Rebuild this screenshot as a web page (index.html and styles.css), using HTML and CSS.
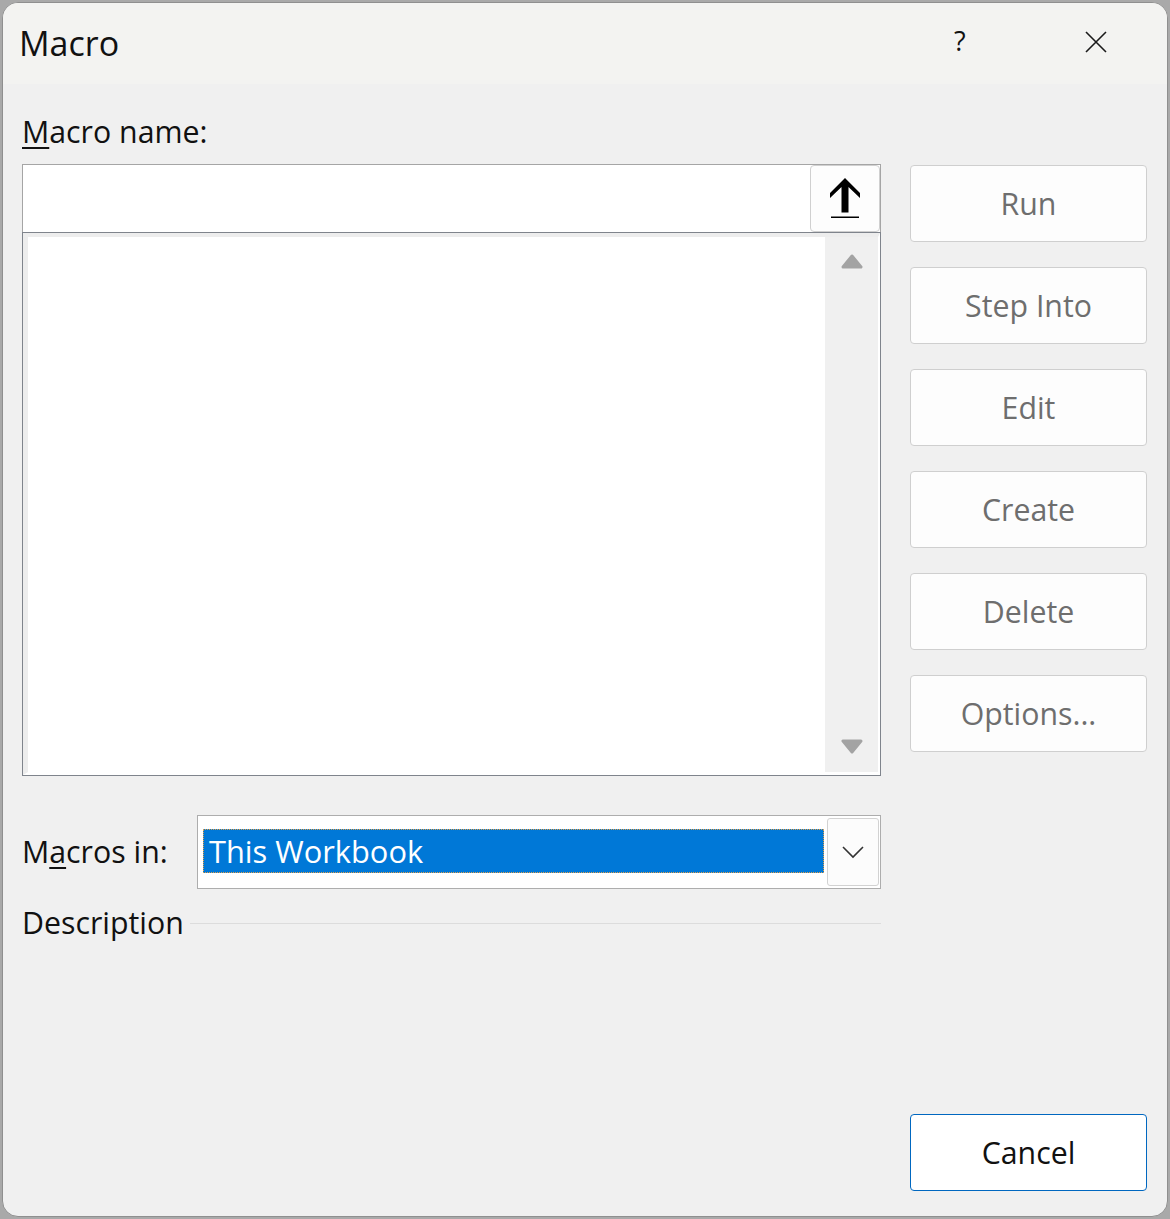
FILE: index.html
```html
<!DOCTYPE html>
<html>
<head>
  <meta charset="utf-8">
  <title>Macro</title>
  <link rel="stylesheet" href="styles.css">
</head>
<body>
<div class="dialog">
  <!-- title bar -->
  <div class="title-bar">
    <div class="title">Macro</div>
    <div class="title-help">?</div>
    <div class="title-close">
      <svg width="22" height="22" viewBox="0 0 22 22"><path d="M1 1 L21 21 M21 1 L1 21" stroke="#1a1a1a" stroke-width="1.6" fill="none"/></svg>
    </div>
  </div>

  <div class="main">
    <div class="left-col">
      <div class="label"><u>M</u>acro name:</div>
      <div class="name-box">
        <div class="name-input"></div>
        <div class="up-btn">
          <svg width="70" height="67" viewBox="0 0 70 67">
            <polygon points="35,13 50,28 50,33 38.5,22 38.5,47.5 31.5,47.5 31.5,22 20,33 20,28" fill="#000"/>
            <rect x="21" y="51.5" width="28" height="1.5" fill="#000"/>
          </svg>
        </div>
      </div>
      <div class="list-box">
        <div class="list-inner">
          <div class="list-area"></div>
          <div class="scroll">
            <svg width="22" height="16" viewBox="0 0 22 16"><path d="M11 2 L20 13 L2 13 Z" fill="#a3a3a3" stroke="#a3a3a3" stroke-width="3" stroke-linejoin="round"/></svg>
            <svg width="22" height="16" viewBox="0 0 22 16"><path d="M2 2 L20 2 L11 13 Z" fill="#a3a3a3" stroke="#a3a3a3" stroke-width="3" stroke-linejoin="round"/></svg>
          </div>
        </div>
      </div>

      <div class="macros-in">
        <div class="label in-label">M<u>a</u>cros in:</div>
        <div class="combo">
          <div class="combo-value"><span>This Workbook</span></div>
          <div class="combo-btn">
            <svg width="24" height="14" viewBox="0 0 24 14"><path d="M2 2 L12 12 L22 2" stroke="#333" stroke-width="1.6" fill="none"/></svg>
          </div>
        </div>
      </div>

      <div class="desc">
        <div class="label">Description</div>
        <div class="desc-line"></div>
      </div>
    </div>

    <div class="right-col">
      <div class="btn">Run</div>
      <div class="btn">Step Into</div>
      <div class="btn">Edit</div>
      <div class="btn">Create</div>
      <div class="btn">Delete</div>
      <div class="btn">Options...</div>
      <div class="btn cancel">Cancel</div>
    </div>
  </div>
</div>
</body>
</html>
```

FILE: styles.css
```css
/* page */
body { margin: 0; padding: 0; background: #a9a9a9; font-family: "Open Sans", "Noto Sans", sans-serif; }
.dialog { margin: 2px; width: 1166px; height: 1215px; box-sizing: border-box; border: 1px solid #8f8f8f; border-radius: 16px; overflow: hidden; background: #f0f0f0; display: flex; flex-direction: column; }

/* title bar */
.title-bar { height: 81px; background: #f3f3f1; display: flex; align-items: center; flex-shrink: 0; }
.title { font-size: 34px; color: #111; margin-left: 16px; flex: 1; margin-top: -2px; }
.title-help { font-size: 27px; color: #111; width: 20px; margin-right: 111px; margin-top: -6px; }
.title-close { width: 22px; height: 22px; margin-right: 60px; margin-top: -4px; }

/* main area */
.main { flex: 1; display: flex; padding: 0 0 25px 19px; }
.left-col { width: 859px; display: flex; flex-direction: column; }
.label { font-size: 30.3px; line-height: 40px; color: #111; }
.left-col > .label { margin-top: 28px; }
.label u { text-decoration-thickness: 2px; text-underline-offset: 4px; }

/* macro name input */
.name-box { margin-top: 12px; height: 67px; border: 1px solid #a5a5a5; border-bottom: none; background: #fff; display: flex; }
.name-input { flex: 1; }
.up-btn { width: 68px; height: 65px; border: 1px solid #d0d0d0; border-radius: 4px; background: #fdfdfd; margin-top: 0; }
.up-btn svg { display: block; margin: -1px; }

/* macro list */
.list-box { height: 542px; border: 1px solid #7f848c; }
.list-inner { height: 100%; box-sizing: border-box; border-style: solid; border-width: 4px 2px 3px 5px; border-color: #ededed #fff #fff #ededed; display: flex; }
.list-area { flex: 1; background: #fff; }
.scroll { width: 53px; background: #f0f0f0; display: flex; flex-direction: column; justify-content: space-between; align-items: center; padding: 17px 0 17px; }
.scroll svg { display: block; }

/* macros in */
.macros-in { display: flex; align-items: center; margin-top: 39px; }
.in-label { width: 175px; }
.combo { flex: 1; height: 72px; border: 1px solid #adadad; background: #fff; display: flex; align-items: flex-start; }
.combo-value { flex: 1; margin: 13px 3px 0 5px; height: 44px; background: #0078d7; outline: 1px dotted #e2a04a; outline-offset: -1px; display: flex; align-items: center; }
.combo-value span { color: #fff; font-size: 30.8px; margin-left: 6px; margin-top: -1px; }
.combo-btn { width: 50px; height: 66px; margin: 2px 1px 0 0; border: 1px solid #d2d2d2; border-radius: 3px; background: #fcfcfc; display: flex; align-items: center; justify-content: center; }

/* description */
.desc { display: flex; align-items: center; margin-top: 14px; }
.desc-line { flex: 1; height: 1px; background: #dcdcdc; margin-left: 6px; margin-top: 1px; }

/* buttons */
.right-col { width: 237px; margin-left: 29px; padding-top: 81px; display: flex; flex-direction: column; gap: 25px; }
.btn { height: 75px; box-sizing: content-box; border: 1px solid #cfcfcf; border-radius: 4px; background: #fdfdfd; color: #6e6e6e; font-size: 30.3px; display: flex; align-items: center; justify-content: center; }
.btn.cancel { margin-top: auto; border-color: #0067c0; color: #111; background: #fff; }
```
